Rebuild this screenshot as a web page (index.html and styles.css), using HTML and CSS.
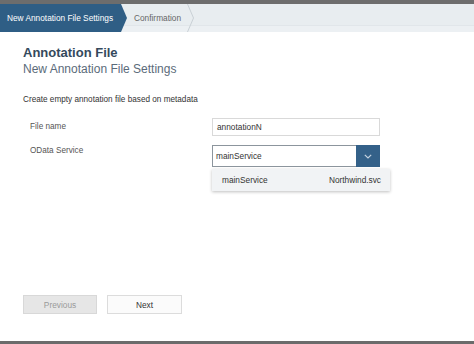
FILE: index.html
```html
<!DOCTYPE html>
<html>
<head>
<meta charset="utf-8">
<link rel="stylesheet" href="styles.css">
</head>
<body>
<div class="page">
  <div class="topbar"></div>
  <div class="tabbar">
    <div class="tab-active">New Annotation File Settings</div>
    <div class="tab">Confirmation</div>
    <svg class="tab-chevron" width="8" height="28" viewBox="0 0 8 28"><polyline points="0.5,0 6.5,14 0.5,28" fill="none" stroke="#c9d0d6" stroke-width="1"/></svg>
  </div>
  <div class="main">
    <div class="content">
      <h1 class="title">Annotation File</h1>
      <h2 class="subtitle">New Annotation File Settings</h2>
      <p class="desc">Create empty annotation file based on metadata</p>
      <div class="form">
        <div class="label label-mid">File name</div>
        <div class="input">annotationN</div>
        <div class="label label-top">OData Service</div>
        <div class="select-wrap">
          <div class="select">
            <div class="select-text">mainService</div>
            <div class="select-btn">
              <svg width="8" height="5" viewBox="0 0 8 5"><polyline points="0.8,0.8 4,4 7.2,0.8" fill="none" stroke="#c5d3e0" stroke-width="1.2"/></svg>
            </div>
          </div>
          <div class="menu">
            <span>mainService</span>
            <span>Northwind.svc</span>
          </div>
        </div>
      </div>
    </div>
    <div class="footer">
      <div class="btn btn-disabled">Previous</div>
      <div class="btn">Next</div>
    </div>
  </div>
  <div class="bottombar"></div>
</div>
</body>
</html>
```
FILE: styles.css
```css
html, body {
  margin: 0;
  padding: 0;
  background: #ffffff;
}
body {
  font-family: "Liberation Sans", Arial, sans-serif;
  color: #333;
}
.page {
  width: 474px;
  height: 344px;
  display: flex;
  flex-direction: column;
  overflow: hidden;
}
.topbar {
  height: 4px;
  background: #6d6d6d;
  flex: none;
}
.tabbar {
  height: 28px;
  flex: none;
  display: flex;
  align-items: center;
  background: linear-gradient(#e8edf0 0, #e8edf0 21.5px, #e1e6ea 21.5px, #e1e6ea 22.5px, #ecf0f3 22.5px);
}
.tab-active {
  width: 128px;
  height: 28px;
  box-sizing: border-box;
  padding-left: 7px;
  display: flex;
  align-items: center;
  background: #2f5e85;
  color: #ffffff;
  font-size: 8.3px;
  clip-path: polygon(0 0, 121px 0, 127px 50%, 121px 100%, 0 100%);
}
.tab {
  padding-left: 6px;
  font-size: 8.3px;
  color: #666;
}
.tab-chevron {
  margin-left: 6px;
  display: block;
}
.main {
  flex: 1;
  display: flex;
  flex-direction: column;
}
.content {
  flex: 1;
  padding: 13px 0 0 23px;
}
.title {
  margin: 0;
  font-size: 13px;
  line-height: 15px;
  font-weight: bold;
  color: #34495c;
}
.subtitle {
  margin: 2px 0 0;
  font-size: 12px;
  line-height: 14px;
  font-weight: normal;
  color: #5b6b7a;
}
.desc {
  margin: 19px 0 0;
  font-size: 8.2px;
  line-height: 10px;
  color: #333;
}
.form {
  margin-top: 13px;
  padding-left: 7px;
  display: grid;
  grid-template-columns: 182px 168px;
  row-gap: 9px;
}
.label {
  font-size: 8.2px;
  line-height: 10px;
  color: #555;
}
.label-mid {
  align-self: center;
}
.label-top {
  align-self: start;
  margin-top: 1px;
}
.input {
  height: 18px;
  box-sizing: border-box;
  border: 1px solid #d9d9d9;
  padding-left: 4px;
  display: flex;
  align-items: center;
  font-size: 8.3px;
  color: #333;
  background: #fff;
}
.select-wrap {
  position: relative;
}
.select {
  height: 22px;
  box-sizing: border-box;
  border: 1px solid #8c959d;
  display: flex;
  background: #fff;
}
.select-text {
  flex: 1;
  padding-left: 3px;
  display: flex;
  align-items: center;
  font-size: 8.3px;
  color: #333;
}
.select-btn {
  width: 24px;
  margin: -1px -1px -1px 0;
  background: #346189;
  display: flex;
  align-items: center;
  justify-content: center;
}
.select-btn svg {
  display: block;
}
.menu {
  position: absolute;
  left: 0;
  top: 24px;
  width: 178px;
  height: 22px;
  box-sizing: border-box;
  padding: 0 9px 0 10px;
  display: flex;
  align-items: center;
  justify-content: space-between;
  background: #f1f3f5;
  box-shadow: 0 1px 3px rgba(0, 0, 0, 0.25);
  font-size: 8.3px;
  color: #333;
}
.footer {
  display: flex;
  gap: 10px;
  padding: 0 0 27px 23px;
}
.btn {
  width: 75px;
  height: 19px;
  box-sizing: border-box;
  border: 1px solid #dcdcdc;
  background: #fbfbfb;
  display: flex;
  align-items: center;
  justify-content: center;
  font-size: 8.3px;
  color: #333;
}
.btn-disabled {
  width: 74px;
  background: #e6e6e6;
  border-color: #d8d8d8;
  color: #9a9a9a;
}
.bottombar {
  height: 3px;
  flex: none;
  background: #6b6b6b;
}
```
